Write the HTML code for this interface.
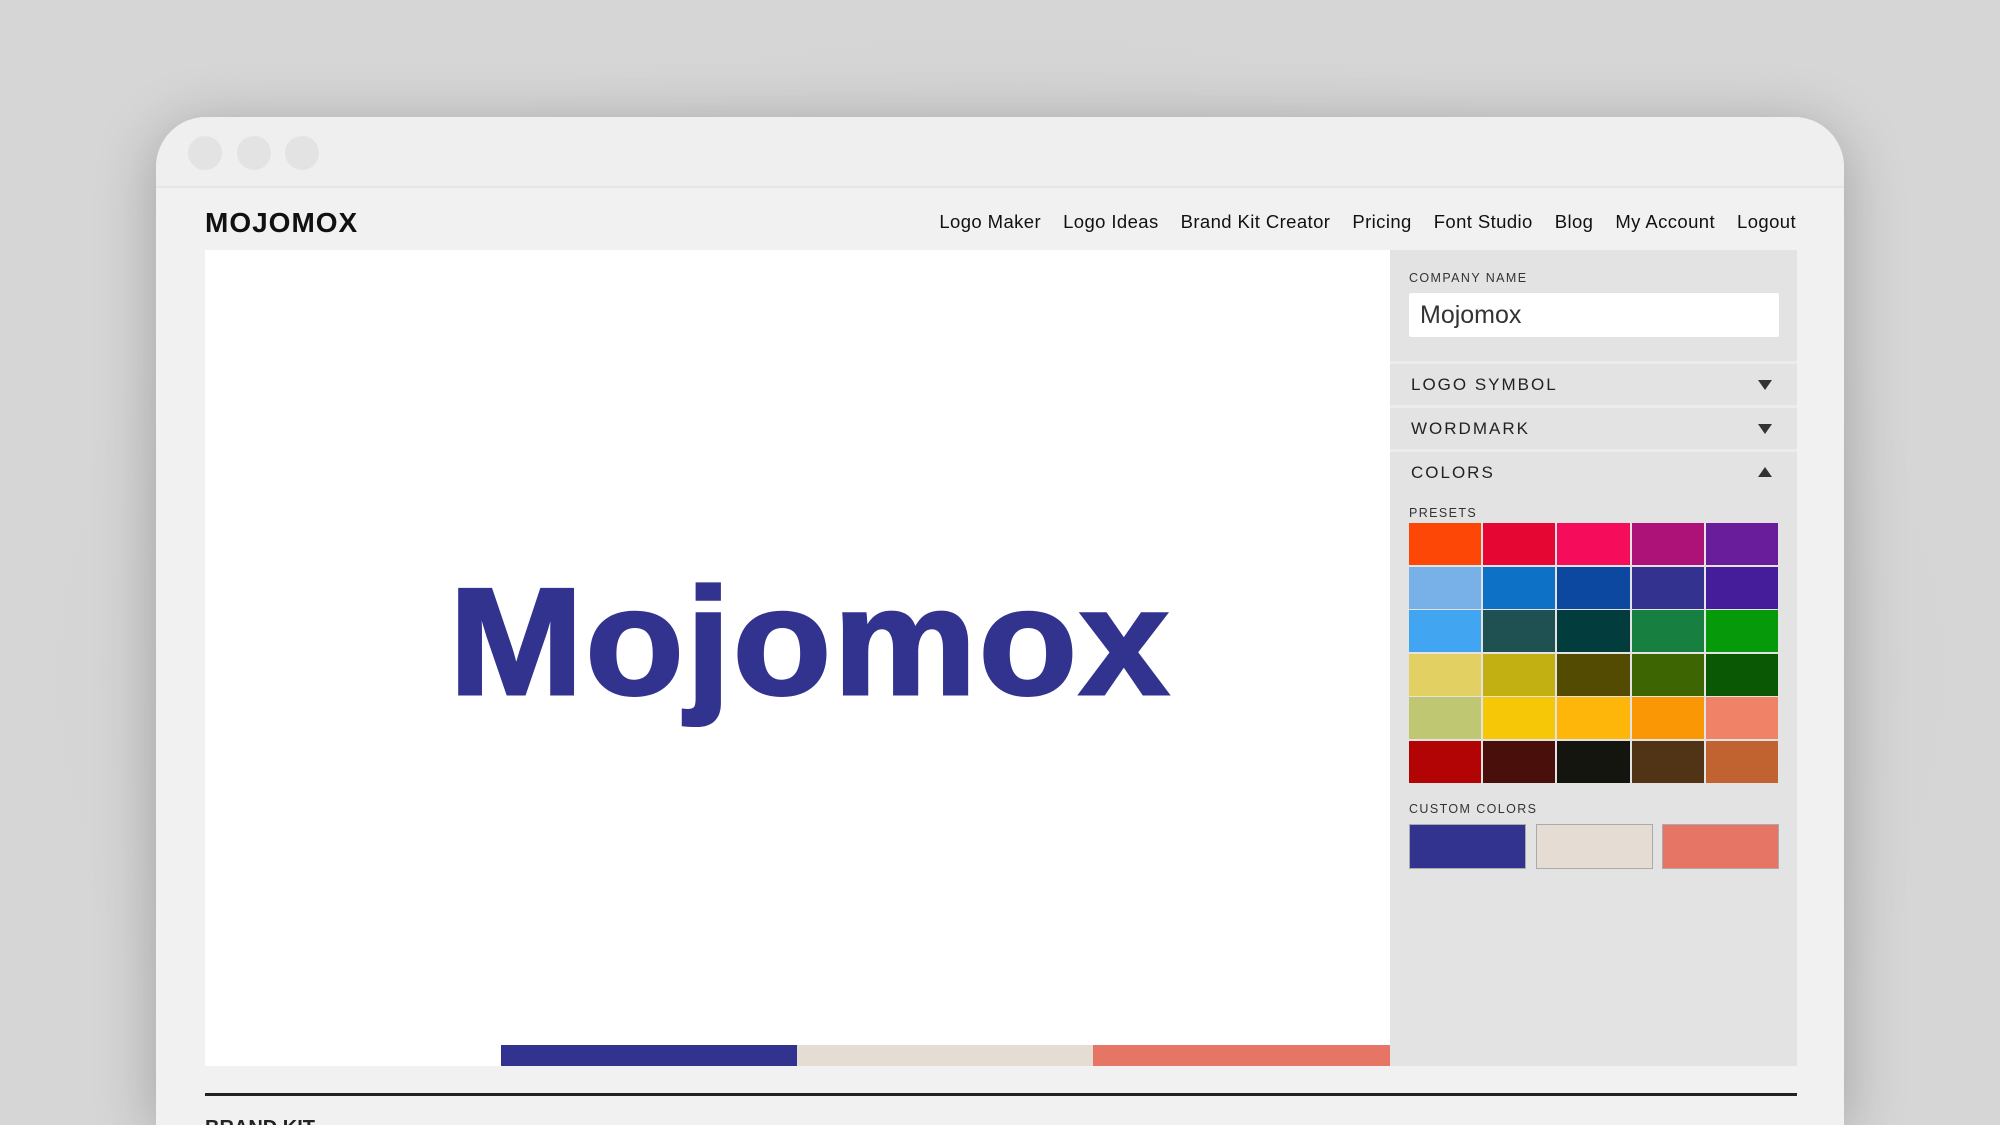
<!DOCTYPE html>
<html><head><meta charset="utf-8"><style>
*{margin:0;padding:0;box-sizing:border-box}
html,body{width:2000px;height:1125px;overflow:hidden}
body{background:#d4d4d4;font-family:"Liberation Sans",sans-serif;position:relative}
.bgg{position:absolute;inset:0;background:radial-gradient(ellipse at 50% 60%,#c8c8c8 0%,#d6d6d6 70%)}
.win{position:absolute;left:156px;top:117px;width:1688px;height:1008px;background:#f1f1f1;border-radius:50px 50px 0 0;overflow:hidden;box-shadow:0 10px 60px rgba(0,0,0,.25)}
.tb{position:absolute;left:0;top:0;right:0;height:71px;background:#efefef;border-bottom:2px solid #e6e6e6}
.dot{position:absolute;top:19px;width:34px;height:34px;border-radius:50%;background:#e3e3e3}
.abs{position:absolute}
.logo{left:49px;top:90px;font-weight:bold;font-size:28px;letter-spacing:1px;color:#111}
.nav{right:48px;top:94px;font-size:18.5px;color:#111;display:flex;gap:22px;letter-spacing:.4px}
.canvas{left:49px;top:133px;width:1185px;height:816px;background:#fff}
.wm{position:absolute;left:244px;top:316px;font-size:152px;font-weight:bold;color:#32338f;letter-spacing:2px;line-height:1;transform:scaleX(1.06);transform-origin:0 0;-webkit-text-stroke:3px #32338f}
.side{left:1234px;top:133px;width:407px;height:816px;background:#e3e3e3}
.lbl{position:absolute;font-size:12.5px;letter-spacing:1.4px;color:#333}
.inp{position:absolute;left:19px;top:43px;width:370px;height:44px;background:#fff;border-radius:2px;font-size:25px;color:#333;padding:8px 11px}
.sec{position:absolute;left:0;width:407px;height:45px;border-top:3px solid #ececec;font-size:17px;letter-spacing:2px;color:#222;padding:11px 0 0 21px}
.tri{position:absolute;right:25px;top:16px;width:0;height:0;border-left:7px solid transparent;border-right:7px solid transparent}
.grid{position:absolute;left:19px;top:273px;display:grid;grid-template-columns:repeat(5,72.2px);grid-auto-rows:42px;gap:1.6px 2px}
.cc{position:absolute;top:574px;width:117px;height:45px;border:1.5px solid #aaa}
</style></head><body><div class="bgg"></div>
<div class="win">
<div class="tb"><div class="dot" style="left:32px"></div><div class="dot" style="left:81px"></div><div class="dot" style="left:129px"></div></div>
<div class="abs logo">MOJOMOX</div>
<div class="abs nav"><span>Logo Maker</span><span>Logo Ideas</span><span>Brand Kit Creator</span><span>Pricing</span><span>Font Studio</span><span>Blog</span><span>My Account</span><span>Logout</span></div>
<div class="abs canvas"><div class="wm">Mojomox</div>
<div class="abs" style="left:296px;top:795px;width:296px;height:21px;background:#32338f"></div>
<div class="abs" style="left:592px;top:795px;width:296px;height:21px;background:#e5dcd3"></div>
<div class="abs" style="left:888px;top:795px;width:297px;height:21px;background:#e77566"></div>
</div>
<div class="abs side">
<div class="lbl" style="left:19px;top:21px">COMPANY NAME</div>
<div class="inp">Mojomox</div>
<div class="sec" style="top:111px">LOGO SYMBOL<div class="tri" style="border-top:10px solid #333"></div></div>
<div class="sec" style="top:155px">WORDMARK<div class="tri" style="border-top:10px solid #333"></div></div>
<div class="sec" style="top:199px">COLORS<div class="tri" style="border-bottom:10px solid #333;top:15px"></div></div>
<div class="lbl" style="left:19px;top:256px">PRESETS</div>
<div class="grid">
<div style="background:#fc4706"></div><div style="background:#e60634"></div><div style="background:#f50c5a"></div><div style="background:#ad1278"></div><div style="background:#6a1d9b"></div>
<div style="background:#78b1e8"></div><div style="background:#0d72c6"></div><div style="background:#0d48a0"></div><div style="background:#33338f"></div><div style="background:#451c99"></div>
<div style="background:#42a5f2"></div><div style="background:#1f5152"></div><div style="background:#023c3c"></div><div style="background:#178040"></div><div style="background:#069a0a"></div>
<div style="background:#e2d062"></div><div style="background:#c2b013"></div><div style="background:#544b02"></div><div style="background:#3d6502"></div><div style="background:#0a5704"></div>
<div style="background:#bfc772"></div><div style="background:#f5c706"></div><div style="background:#feb60a"></div><div style="background:#fa9704"></div><div style="background:#f08268"></div>
<div style="background:#b20404"></div><div style="background:#480f0b"></div><div style="background:#151510"></div><div style="background:#513315"></div><div style="background:#c06331"></div>
</div>
<div class="lbl" style="left:19px;top:552px">CUSTOM COLORS</div>
<div class="cc" style="left:19px;background:#32338f"></div>
<div class="cc" style="left:146px;background:#e5dcd3"></div>
<div class="cc" style="left:272px;background:#e77566"></div>
</div>
<div class="abs" style="left:49px;top:976px;width:1592px;height:3px;background:#222"></div>
<div class="abs" style="left:49px;top:1000px;font-size:20px;font-weight:bold;color:#222">BRAND KIT</div>
</div>
</body></html>
